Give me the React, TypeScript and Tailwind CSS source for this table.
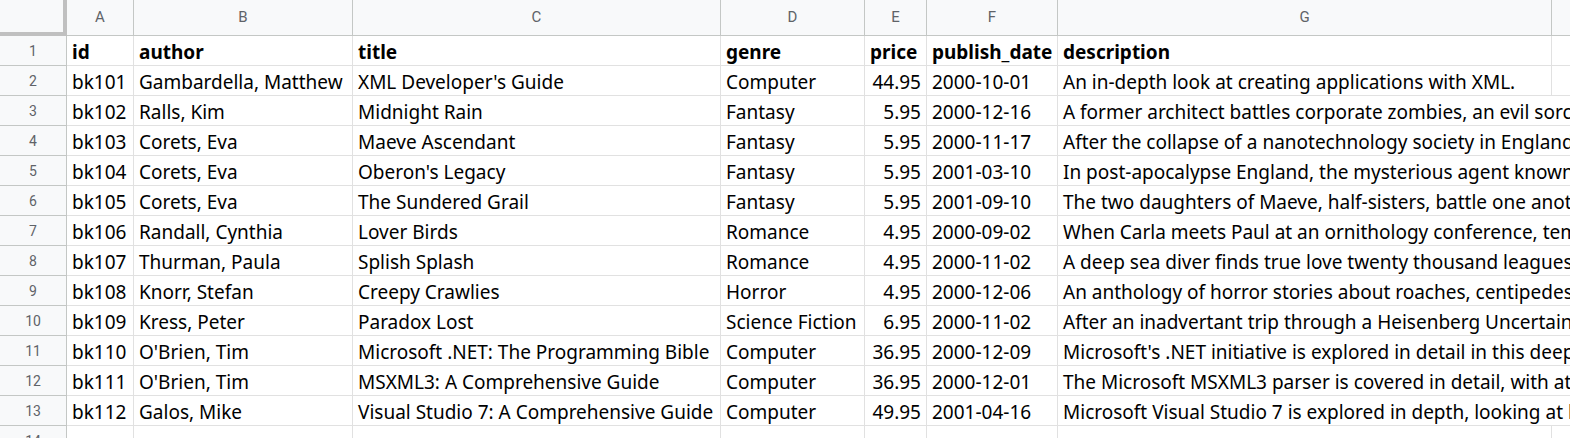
const columns = [
  { key: 'A', width: 'w-[67px]' },
  { key: 'B', width: 'w-[219px]' },
  { key: 'C', width: 'w-[368px]' },
  { key: 'D', width: 'w-[144px]' },
  { key: 'E', width: 'w-[62px]' },
  { key: 'F', width: 'w-[131px]' },
  { key: 'G', width: 'w-[494px]' }
]

const books = [
  ['bk101', 'Gambardella, Matthew', "XML Developer's Guide", 'Computer', '44.95', '2000-10-01', 'An in-depth look at creating applications with XML.'],
  ['bk102', 'Ralls, Kim', 'Midnight Rain', 'Fantasy', '5.95', '2000-12-16', 'A former architect battles corporate zombies, an evil sorceress, and her own childhood to become queen of the world.'],
  ['bk103', 'Corets, Eva', 'Maeve Ascendant', 'Fantasy', '5.95', '2000-11-17', 'After the collapse of a nanotechnology society in England, the young survivors lay the foundation for a new society.'],
  ['bk104', 'Corets, Eva', "Oberon's Legacy", 'Fantasy', '5.95', '2001-03-10', 'In post-apocalypse England, the mysterious agent known only as Oberon helps to create a new life.'],
  ['bk105', 'Corets, Eva', 'The Sundered Grail', 'Fantasy', '5.95', '2001-09-10', 'The two daughters of Maeve, half-sisters, battle one another for control of England.'],
  ['bk106', 'Randall, Cynthia', 'Lover Birds', 'Romance', '4.95', '2000-09-02', 'When Carla meets Paul at an ornithology conference, tempers fly as feathers get ruffled.'],
  ['bk107', 'Thurman, Paula', 'Splish Splash', 'Romance', '4.95', '2000-11-02', 'A deep sea diver finds true love twenty thousand leagues beneath the sea.'],
  ['bk108', 'Knorr, Stefan', 'Creepy Crawlies', 'Horror', '4.95', '2000-12-06', 'An anthology of horror stories about roaches, centipedes, scorpions and other insects.'],
  ['bk109', 'Kress, Peter', 'Paradox Lost', 'Science Fiction', '6.95', '2000-11-02', 'After an inadvertant trip through a Heisenberg Uncertainty Device, James Salway discovers the problems of being quantum.'],
  ['bk110', "O'Brien, Tim", 'Microsoft .NET: The Programming Bible', 'Computer', '36.95', '2000-12-09', "Microsoft's .NET initiative is explored in detail in this deep programmer's reference."],
  ['bk111', "O'Brien, Tim", 'MSXML3: A Comprehensive Guide', 'Computer', '36.95', '2000-12-01', 'The Microsoft MSXML3 parser is covered in detail, with attention to XML DOM interfaces.'],
  ['bk112', 'Galos, Mike', 'Visual Studio 7: A Comprehensive Guide', 'Computer', '49.95', '2001-04-16', 'Microsoft Visual Studio 7 is explored in depth, looking at how Visual Basic, Visual C++ and C# fit together.']
]

const headers = ['id', 'author', 'title', 'genre', 'price', 'publish_date', 'description']

const cellFont = "[font-family:Lato,'Liberation Sans',sans-serif] text-[19px] text-black"

const RowNumber = ({ n }: { n: number }) => (
  <div className="w-[67px] shrink-0 h-[30px] border-r border-b border-[#c4c7c5] bg-[#f8f9fa] flex items-center justify-center pt-[2px] [font-family:Roboto,sans-serif] text-[14px] text-[#5f6368]">
    {n}
  </div>
)

const Cell = ({
  width,
  text,
  bold,
  right,
  overflow,
  last
}: {
  width: string
  text: string
  bold?: boolean
  right?: boolean
  overflow?: boolean
  last?: boolean
}) => (
  <div
    className={`${width} shrink-0 h-[30px] border-b border-[#e1e1e1] flex items-center pt-[4px] px-[5px] whitespace-nowrap ${cellFont} ${
      bold ? 'font-bold' : ''
    } ${right ? 'justify-end' : ''} ${
      overflow ? 'overflow-visible relative z-10' : 'overflow-hidden'
    } ${last && overflow ? '' : 'border-r'}`}
  >
    {text}
  </div>
)

export default function App() {
  return (
    <div className="w-[1570px] h-[438px] overflow-hidden bg-white">
      <div className="flex h-[36px]">
        <div className="w-[67px] shrink-0 h-[36px] bg-[#f8f9fa] border-r-[4px] border-b-[4px] border-[#c0c0c0]" />
        {columns.map((col) => (
          <div
            key={col.key}
            className={`${col.width} shrink-0 h-[36px] bg-[#f8f9fa] border-r border-b border-[#c4c7c5] flex items-center justify-center [font-family:Roboto,sans-serif] text-[15px] text-[#5f6368]`}
          >
            {col.key}
          </div>
        ))}
        <div className="flex-1 h-[36px] bg-[#f8f9fa] border-b border-[#c4c7c5]" />
      </div>

      <div className="flex">
        <RowNumber n={1} />
        {headers.map((h, i) => (
          <Cell key={h} width={columns[i].width} text={h} bold />
        ))}
        <div className="flex-1 h-[30px] border-b border-[#e1e1e1]" />
      </div>

      {books.map((book, r) => (
        <div key={book[0]} className="flex">
          <RowNumber n={r + 2} />
          {book.map((value, i) => (
            <Cell
              key={i}
              width={columns[i].width}
              text={value}
              right={i === 4}
              overflow={i === 6 && r > 0}
              last={i === 6}
            />
          ))}
          <div className="flex-1 h-[30px] border-b border-[#e1e1e1]" />
        </div>
      ))}

      <div className="flex">
        <RowNumber n={14} />
        {columns.map((col) => (
          <div key={col.key} className={`${col.width} shrink-0 h-[30px] border-r border-[#e1e1e1]`} />
        ))}
      </div>
    </div>
  )
}
